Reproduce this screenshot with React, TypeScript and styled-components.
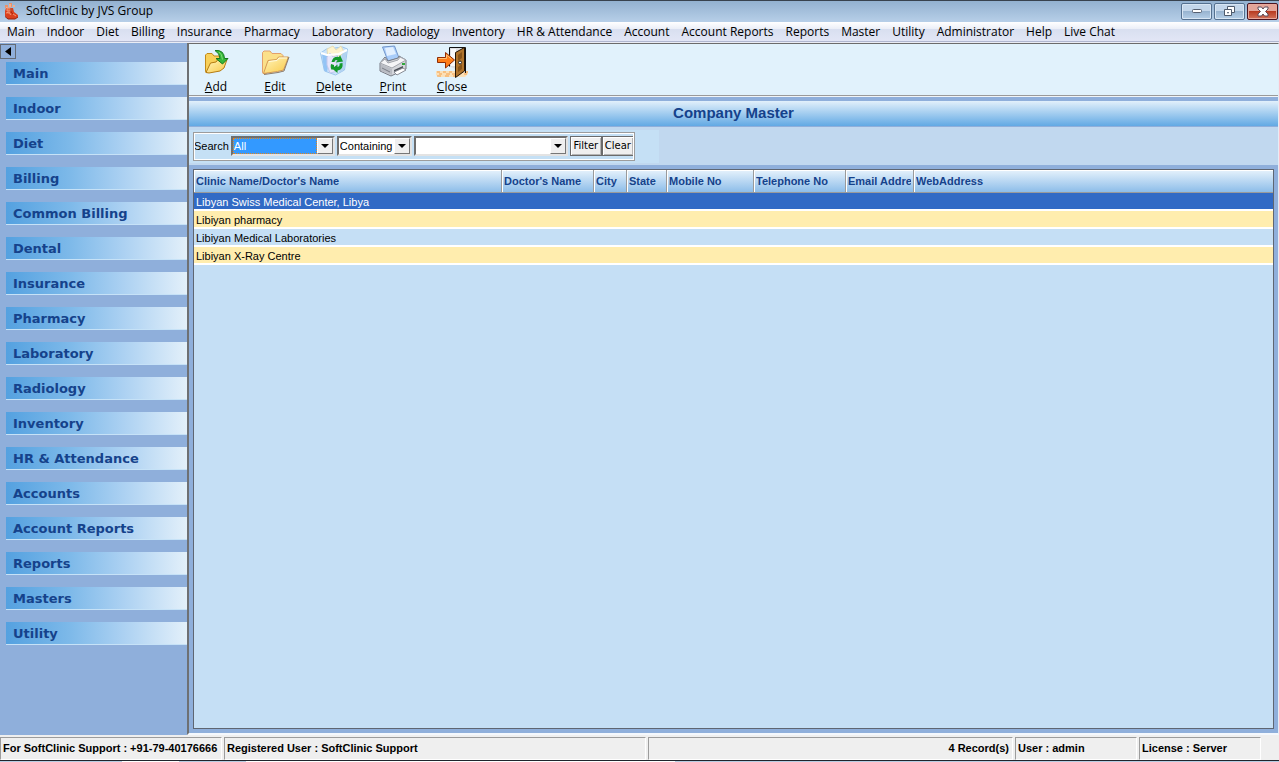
import React from 'react';
import styled, { createGlobalStyle, css } from 'styled-components';

const sans = '"Liberation Sans", Arial, sans-serif';
const ui = '"Open Sans", "Noto Sans", sans-serif';
const navy = '#15428b';
const sunken = css`
  border: 2px solid;
  border-color: #6e6e6e #e3e3e3 #e3e3e3 #6e6e6e;
`;

const GlobalStyle = createGlobalStyle`
  * { box-sizing: border-box; }
  body { margin: 0; font: 11px ${sans}; color: #000; }
  button, input, select { font: inherit; color: inherit; margin: 0; padding: 0; border-radius: 0; }
`;

const Window = styled.div`
  display: flex;
  flex-direction: column;
  min-height: 100vh;
  background: #efefef;
`;

const TitleBar = styled.header`
  display: flex;
  align-items: center;
  gap: 7px;
  height: 22px;
  padding: 0 1px 1px 2px;
  border-top: 1px solid #38424e;
  background: linear-gradient(#93b1d0, #b7cfe8);
`;

const AppTitle = styled.h1`
  flex: 1;
  margin: 0;
  font: 12px/20px ${ui};
`;

const WindowButtons = styled.div`
  display: flex;
  gap: 2px;
`;

const WindowButton = styled.button<{ $danger?: boolean }>`
  display: flex;
  align-items: center;
  justify-content: center;
  width: 31px;
  height: 17px;
  border: 1px solid ${p => (p.$danger ? '#4a1420' : '#54708f')};
  border-radius: 2px;
  box-shadow: inset 0 0 0 1px ${p => (p.$danger ? '#e8a99c' : '#d8e6f4')};
  background: ${p => p.$danger
    ? 'linear-gradient(#e3a599 0 45%, #b83c22 50%, #d4735a)'
    : 'linear-gradient(#c3d6ea 0 45%, #98b4d0 50%, #b5cfe8)'};
`;

const MenuBar = styled.nav`
  display: flex;
  gap: 12px;
  height: 20px;
  padding-left: 7px;
  border-bottom: 1px solid #b0b7d0;
  background: linear-gradient(#ffffff, #eceff8 35%, #d8dff0 36%, #e2e6f6);
  white-space: nowrap;
`;

const MenuLink = styled.a`
  color: #000;
  font: 12px/19px ${ui};
  text-decoration: none;
`;

const Body = styled.div`
  flex: 1;
  display: flex;
  border-top: 1px solid #e9ecf5;
`;

const Sidebar = styled.aside`
  display: flex;
  flex-direction: column;
  width: 187px;
  background: #8fafdb;
`;

const CollapseButton = styled.button`
  display: flex;
  align-items: center;
  justify-content: center;
  width: 16px;
  height: 15px;
  margin: 1px 0 3px;
  border: 1px solid #646b76;
  background: transparent;
`;

const SideList = styled.nav`
  display: flex;
  flex-direction: column;
  gap: 12px;
  padding-left: 6px;
`;

const SideLink = styled.a`
  height: 23px;
  padding: 1px 0 0 7px;
  border-bottom: 1px solid #c6e2f7;
  background: linear-gradient(90deg, #54a1e0, #7db9e9 35%, #acd1f2 65%, #e3f0fa);
  color: ${navy};
  font: bold 13px/22px "DejaVu Sans", Verdana, sans-serif;
  text-decoration: none;
`;

const Main = styled.main`
  flex: 1;
  display: flex;
  flex-direction: column;
  min-width: 0;
  border: solid;
  border-width: 1px 1px 2px 2px;
  border-color: #6b6b6b #e4edf7 #f4f8fd #6e7073;
  background: #8fafdb;
`;

const Toolbar = styled.div`
  display: flex;
  gap: 13px;
  height: 53px;
  padding-left: 4px;
  border-bottom: 1px solid #f1f5f8;
  box-shadow: inset 0 -1px #9a9a9a;
  background: #e1f2fc;
`;

const ToolButton = styled.button`
  display: flex;
  flex-direction: column;
  align-items: center;
  gap: 1px;
  width: 46px;
  border: 0;
  background: transparent;
  font: 12px/16px ${ui};
`;

const Shortcut = styled.span`
  text-decoration: underline;
`;

const PageTitle = styled.h2`
  margin: 4px 0 1px;
  padding-bottom: 1px;
  background: linear-gradient(#e2f0fb, #62a9e4);
  color: ${navy};
  font: bold 15px/24px ${sans};
  text-align: center;
`;

const SearchStrip = styled.div`
  padding: 3px 0 2px;
  background: #c1d8ef;
`;

const SearchTint = styled.div`
  width: 470px;
  padding: 2px 4px;
  background: #c5e0f5;
`;

const SearchForm = styled.form`
  display: flex;
  gap: 2px;
  width: 442px;
  height: 29px;
  padding-top: 3px;
  border: 1px solid #9c9c9c;
  outline: 1px solid #ffffff;
  outline-offset: -2px;
`;

const SearchLabel = styled.label`
  line-height: 20px;
`;

const DropFrame = styled.span<{ $width: number }>`
  ${sunken}
  display: flex;
  flex: none;
  width: ${p => p.$width}px;
  height: 20px;
  background: #fff;
`;

const fieldStyle = css`
  flex: 1;
  min-width: 0;
  height: 16px;
  padding: 0 0 0 1px;
  border: 0;
  outline: 0;
  appearance: none;
  background: #fff;
  line-height: 16px;
`;

const DropSelect = styled.select<{ $active?: boolean }>`
  ${fieldStyle}
  ${p => p.$active && css`
    padding: 0;
    border: 1px dotted #e0861f;
    background: #3399ff;
    color: #fff;
    line-height: 14px;
  `}
`;

const DropInput = styled.input`
  ${fieldStyle}
`;

const DropButton = styled.button`
  display: flex;
  align-items: center;
  justify-content: center;
  width: 16px;
  border: 1px solid;
  border-color: #fff #777 #777 #fff;
  background: #efefef;
`;

const ButtonPair = styled.div`
  display: flex;
`;

const PlainButton = styled.button`
  width: 32px;
  height: 20px;
  border: 1px solid #6b6b6b;
  box-shadow: inset 1px 1px #fff, inset -1px -1px #b5b5b5;
  background: #efefef;
  font: 10px/16px "DejaVu Sans", Verdana, sans-serif;
`;

const GridFrame = styled.div`
  flex: 1;
  margin: 4px;
  border: 1px solid #5f6672;
  background: #c5dff5;
`;

const Grid = styled.table`
  width: 100%;
  table-layout: fixed;
  border-collapse: separate;
  border-spacing: 0;
`;

const HeadCell = styled.th`
  height: 23px;
  padding: 0 2px;
  border-right: 1px solid #9a9a9a;
  border-bottom: 1px solid #9a9a9a;
  background: linear-gradient(#e6f2fc, #8dbde9);
  box-shadow: inset 1px 1px #fff;
  color: ${navy};
  text-align: left;
  white-space: nowrap;

  &:last-child { border-right: 0; }
`;

const HeadText = styled.div`
  overflow: hidden;
`;

const Row = styled.tr<{ $selected: boolean }>`
  background: ${p => (p.$selected ? '#316ac5' : '#c5dff5')};
  color: ${p => (p.$selected ? '#fff' : '#000')};

  &:nth-child(even) { background: #ffedae; }
`;

const Cell = styled.td`
  height: 18px;
  padding: 2px 2px 0;
  border-bottom: 2px solid #fff;
  line-height: 14px;
`;

const StatusBar = styled.footer`
  display: flex;
  gap: 2px;
  padding: 2px 18px 0 0;
  border-bottom: 1px solid #20242c;
  background: #efefef;
`;

const StatusCell = styled.div<{ $width?: number; $right?: boolean }>`
  flex: ${p => (p.$width ? `0 1 ${p.$width}px` : '1')};
  height: 23px;
  padding: 0 3px 0 2px;
  overflow: hidden;
  border: 1px solid;
  border-color: #9c9c9c #fff #fff #9c9c9c;
  font: bold 11px/21px ${sans};
  text-align: ${p => (p.$right ? 'right' : 'left')};
  white-space: nowrap;
`;

const DesktopEdge = styled.div`
  height: 1px;
  background: linear-gradient(90deg, #b7cde2 122px, #fff 122px 179px, #b7cde2 179px 246px, #fff 246px 675px, #b7cde2 675px);
`;

const Heart = () => (
  <svg width="17" height="18" viewBox="0 0 17 18" aria-hidden="true">
    <path d="M3 3h3v3H3zM7 1h3v4H7zM11 3h2v2h-2z" fill="#e9926c" />
    <path d="M4 6h2M8 2v3M11 4h2" stroke="#f8cdb4" fill="none" />
    <path d="M4 6h7l1 4 4 3v2l-3 2H6l-3-3V9Z" fill="#d9411f" />
    <path d="M5 6h4v3H5zM4 11l3-1 2 3M11 12l3 2" stroke="#f49473" fill="#e86a40" />
    <path d="M3 14.500 6 17h7l3-2" stroke="#97230f" fill="none" />
    <path d="M9 6v4l2 2" stroke="#a82b12" fill="none" />
  </svg>
);

const MinimizeGlyph = () => (
  <svg width="12" height="6" viewBox="0 0 12 6" aria-hidden="true">
    <rect x="1.500" y="1.500" width="9" height="3" rx="1" fill="#fff" stroke="#555f70" />
  </svg>
);

const RestoreGlyph = () => (
  <svg width="13" height="12" viewBox="0 0 13 12" aria-hidden="true" fill="#fff" stroke="#4f5b6c">
    <path d="M4.500 1.500h7v6h-7z" />
    <path d="M1.500 4.500h7v6h-7z" />
    <path d="M4.500 7.500h1v.500h-1z" />
  </svg>
);

const CloseGlyph = () => (
  <svg width="12" height="11" viewBox="0 0 12 11" aria-hidden="true">
    <path d="M1 1h3.500L6 3l1.500-2H11v2L8.500 5.500 11 8v2H7.500L6 8l-1.500 2H1V8l2.500-2.500L1 3Z" fill="#fff" stroke="#5c4b58" />
  </svg>
);

const DownArrow = () => (
  <svg width="8" height="4" viewBox="0 0 8 4" aria-hidden="true"><path d="M0 0h8L4 4Z" /></svg>
);

const LeftArrow = () => (
  <svg width="6" height="9" viewBox="0 0 6 9" aria-hidden="true"><path d="M6 0v9L0 4.500Z" /></svg>
);

const folderPaint = (
  <defs>
    <linearGradient id="folderFront" x1="0" y1="0" x2="1" y2="1">
      <stop offset="0" stopColor="#fff6bd" />
      <stop offset="1" stopColor="#f9c846" />
    </linearGradient>
  </defs>
);

const AddIcon = () => (
  <svg width="32" height="34" viewBox="0 0 32 34" aria-hidden="true">
    {folderPaint}
    <path d="M5.500 27V11l1.500-1.500h5L14 12h8l1 2v5L9 28.500H6Z" fill="#f8d059" stroke="#c28a1a" />
    <path d="M6 28.500 10.500 19l5.500-1 2-2.500h9L24 24l-4 3-11 2Z" fill="url(#folderFront)" stroke="#b57c12" />
    <path d="M15 6.500q9-1 9.500 8H28L22.500 20 16 14.500h4q0-5-5-8Z" fill="#35b93b" stroke="#13781c" />
    <path d="M19 8q3 2 3.500 7.500" stroke="#7fdc74" fill="none" />
  </svg>
);

const EditIcon = () => (
  <svg width="32" height="34" viewBox="0 0 32 34" aria-hidden="true">
    <path d="M3.500 28V8.500L5 7h6l2 2.500h9l2 2v5L7 29.500H4Z" fill="#fbe08a" stroke="#e3a06c" />
    <path d="M4.500 29.500 9 16.500l8.500-1 2-2.500H29.500l-5 13-6 1.500Z" fill="url(#folderFront)" stroke="#d59a52" />
    <path d="m10 17.500 8-1 2-2.500h8" stroke="#fffce2" fill="none" />
    <path d="m5 30.500 14-2 6-1.500L30 13" stroke="#8a7b6c" fill="none" />
  </svg>
);

const DeleteIcon = () => (
  <svg width="32" height="34" viewBox="0 0 32 34" aria-hidden="true">
    <path d="m2.500 9 6-4 16-2 5 2-3 21-9 5-11-4Z" fill="#cbe4fb" stroke="#9dc5ec" />
    <path d="m9 5 6-3 3 4 5-4 3 6-6 6H10Z" fill="#fdf3cc" stroke="#e4dcb8" />
    <path d="m4 10 5 1 2 6-2 11-3-2Z" fill="#93c4f5" />
    <path d="m9 13 3-4 3 4 5-2-2 7 2 9-8 2-3-8Z" fill="#e7e6fb" stroke="#c3c8ec" />
    <path d="m24 10 5-4-3 20-5 3Z" fill="#b2d3f1" />
    <path d="m3 9 6 2 12-1 8-4" stroke="#fff" strokeWidth="2" fill="none" />
    <path d="M13.500 18q1.500-6 7.500-5l1-2 3 6.500-7 1 1.500-2.500q-3-.500-3 2Z" fill="#139a2c" />
    <path d="M24.500 19q1 7-5 7.500V29L14 24.500l5.500-4v2.500q2.500-.500 2-3.500Z" fill="#139a2c" />
    <path d="m13 20 3 1v3l-2 2q-2-2-1-6Z" fill="#139a2c" />
  </svg>
);

const PrintIcon = () => (
  <svg width="32" height="34" viewBox="0 0 32 34" aria-hidden="true">
    <path d="m5.500 3 12-1 4.500 12-11 3Z" fill="#a9cdfa" stroke="#7396ca" />
    <path d="m8 4 8-1 3 7-9 2Z" fill="#e2f0ff" />
    <path d="m3 19 5-6 3 4 10-3 1-2 7 4v9l-15 7L3 27Z" fill="#d5d7dc" stroke="#777b84" />
    <path d="m3 19 12 5 14-8-6-3-2 3-10 3-3-4Z" fill="#f5f5f7" stroke="#a2a5ac" />
    <path d="m4 20 11 5v6L4 27Z" fill="#b9bcc3" />
    <path d="m17 26 9-4v3l-9 4Z" fill="#4a4e56" />
    <path d="m17 28 9-4 3 2-9 5Z" fill="#fff" stroke="#888c94" />
    <path d="m5 24 8 4" stroke="#7b7e86" />
    <rect x="25" y="19" width="3" height="2" fill="#2fa83b" />
  </svg>
);

const CloseIcon = () => (
  <svg width="32" height="34" viewBox="0 0 32 34" aria-hidden="true">
    <path d="M0 27h32v3l-3 3H3l-3-2Z" fill="#fbe0b8" />
    <path d="M1 28h3m3 0h3m3 0h3m12 0h4M3 30h3m4 0h4m2 0h3m9 0h3M1 32h4m4 0h4m4 0h3" stroke="#f4a04b" />
    <path d="M13.500 22.500v-19h16V29" fill="#dedfe3" stroke="#111" />
    <path d="M15 5h5v17h-5z" fill="#f9f9fb" />
    <path d="M19.500 8.500 28.500 3.500V27l-9 6.500Z" fill="#b0742c" stroke="#241505" />
    <path d="m22 11 4-3v6l-4 3Zm0 12 4-3v5l-4 3Z" fill="#87541a" />
    <circle cx="24" cy="18.500" r="1.500" fill="#fff" stroke="#222" />
    <path d="M1.500 13.500h8V8.500L18.500 16 9.500 24v-5.500h-8Z" fill="#ff7d18" stroke="#8f2c04" />
    <path d="M2.500 14.500h8V11l5 4" stroke="#ffc175" fill="none" />
  </svg>
);

const menus = ['Main', 'Indoor', 'Diet', 'Billing', 'Insurance', 'Pharmacy', 'Laboratory', 'Radiology', 'Inventory',
  'HR & Attendance', 'Account', 'Account Reports', 'Reports', 'Master', 'Utility', 'Administrator', 'Help', 'Live Chat'];

const modules = ['Main', 'Indoor', 'Diet', 'Billing', 'Common Billing', 'Dental', 'Insurance', 'Pharmacy', 'Laboratory',
  'Radiology', 'Inventory', 'HR & Attendance', 'Accounts', 'Account Reports', 'Reports', 'Masters', 'Utility'];

const tools = [
  { label: 'Add', icon: <AddIcon /> },
  { label: 'Edit', icon: <EditIcon /> },
  { label: 'Delete', icon: <DeleteIcon /> },
  { label: 'Print', icon: <PrintIcon /> },
  { label: 'Close', icon: <CloseIcon /> },
];

const columns: { name: string; width?: number }[] = [
  { name: "Clinic Name/Doctor's Name", width: 308 },
  { name: "Doctor's Name", width: 92 },
  { name: 'City', width: 33 },
  { name: 'State', width: 40 },
  { name: 'Mobile No', width: 87 },
  { name: 'Telephone No', width: 92 },
  { name: 'Email Address', width: 68 },
  { name: 'WebAddress' },
];

const companies = ['Libyan Swiss Medical Center, Libya', 'Libiyan pharmacy', 'Libiyan Medical Laboratories', 'Libiyan X-Ray Centre'];

export default function App() {
  return (
    <Window>
      <GlobalStyle />
      <TitleBar>
        <Heart />
        <AppTitle>SoftClinic by JVS Group</AppTitle>
        <WindowButtons>
          <WindowButton aria-label="Minimize"><MinimizeGlyph /></WindowButton>
          <WindowButton aria-label="Restore"><RestoreGlyph /></WindowButton>
          <WindowButton aria-label="Close window" $danger><CloseGlyph /></WindowButton>
        </WindowButtons>
      </TitleBar>
      <MenuBar>
        {menus.map(m => <MenuLink key={m} href="#">{m}</MenuLink>)}
      </MenuBar>
      <Body>
        <Sidebar>
          <CollapseButton aria-label="Collapse sidebar"><LeftArrow /></CollapseButton>
          <SideList>
            {modules.map(m => <SideLink key={m} href="#">{m}</SideLink>)}
          </SideList>
        </Sidebar>
        <Main>
          <Toolbar>
            {tools.map(t => (
              <ToolButton key={t.label}>
                {t.icon}
                <span><Shortcut>{t.label[0]}</Shortcut>{t.label.slice(1)}</span>
              </ToolButton>
            ))}
          </Toolbar>
          <PageTitle>Company Master</PageTitle>
          <SearchStrip>
            <SearchTint>
              <SearchForm onSubmit={e => e.preventDefault()}>
                <SearchLabel htmlFor="field">Search</SearchLabel>
                <DropFrame $width={104}>
                  <DropSelect id="field" $active><option>All</option></DropSelect>
                  <DropButton type="button" aria-label="Show fields"><DownArrow /></DropButton>
                </DropFrame>
                <DropFrame $width={75}>
                  <DropSelect aria-label="Condition"><option>Containing</option></DropSelect>
                  <DropButton type="button" aria-label="Show conditions"><DownArrow /></DropButton>
                </DropFrame>
                <DropFrame $width={154}>
                  <DropInput aria-label="Search text" />
                  <DropButton type="button" aria-label="Show recent searches"><DownArrow /></DropButton>
                </DropFrame>
                <ButtonPair>
                  <PlainButton type="submit">Filter</PlainButton>
                  <PlainButton type="reset">Clear</PlainButton>
                </ButtonPair>
              </SearchForm>
            </SearchTint>
          </SearchStrip>
          <GridFrame>
            <Grid>
              <colgroup>
                {columns.map(c => <col key={c.name} width={c.width} />)}
              </colgroup>
              <thead>
                <tr>{columns.map(c => <HeadCell key={c.name} scope="col"><HeadText>{c.name}</HeadText></HeadCell>)}</tr>
              </thead>
              <tbody>
                {companies.map((name, i) => (
                  <Row key={name} $selected={i === 0}>
                    {columns.map((c, j) => <Cell key={c.name}>{j === 0 ? name : ''}</Cell>)}
                  </Row>
                ))}
              </tbody>
            </Grid>
          </GridFrame>
        </Main>
      </Body>
      <StatusBar>
        <StatusCell $width={222}>For SoftClinic Support : +91-79-40176666</StatusCell>
        <StatusCell $width={422}>Registered User : SoftClinic Support</StatusCell>
        <StatusCell $right>4 Record(s)</StatusCell>
        <StatusCell $width={122}>User : admin</StatusCell>
        <StatusCell $width={122}>License : Server</StatusCell>
      </StatusBar>
      <DesktopEdge />
    </Window>
  );
}
